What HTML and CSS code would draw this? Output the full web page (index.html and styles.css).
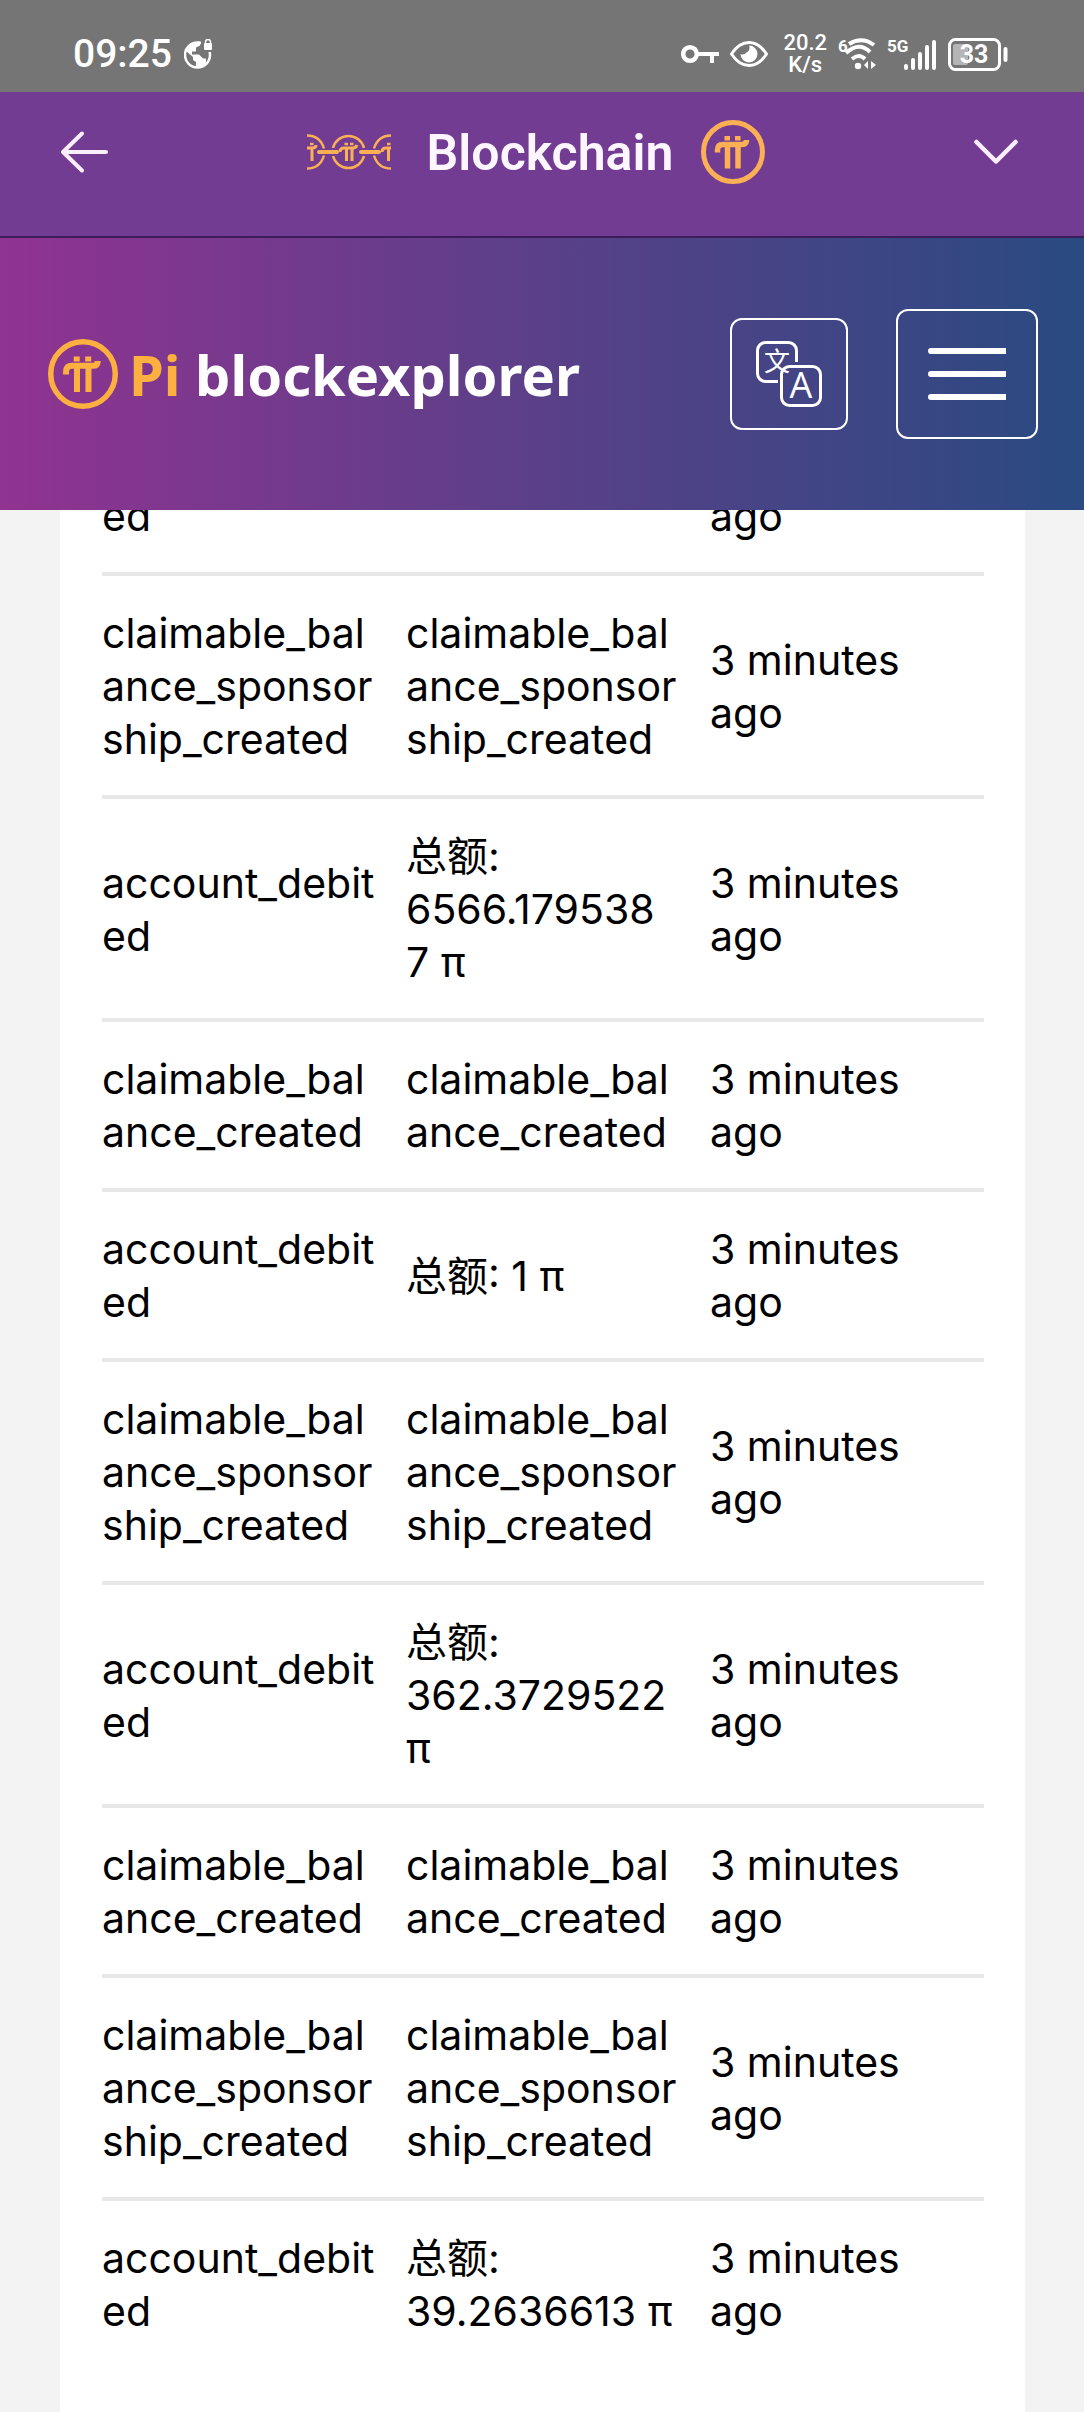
FILE: index.html
```html
<!DOCTYPE html>
<html lang="zh">
<head>
<meta charset="utf-8">
<meta name="viewport" content="width=device-width, initial-scale=1">
<title>Pi blockexplorer</title>
<link rel="stylesheet" href="styles.css">
</head>
<body>
<svg class="defs" aria-hidden="true">
  <symbol id="pi" viewBox="0 0 64 64">
    <circle cx="32" cy="32" r="29.5" fill="none" stroke="currentColor" stroke-width="5"/>
    <path d="M23.5 16h5.500v4.500h-5.500zM34 16h5.500v4.500h-5.500z" fill="currentColor"/>
    <path d="M16.500 32.500v-2.500q0-5.500 5.500-5.500h19q4.500 0 4.500-4.500M26.500 25v23.500M37 25v23.500" fill="none" stroke="currentColor" stroke-width="5.500"/>
  </symbol>
</svg>

<div class="status">
  <div class="status-group">
    <span class="clock">09:25</span>
    <svg width="28" height="30" viewBox="0 0 28 30" aria-hidden="true">
      <circle cx="13.500" cy="16" r="12.500" fill="none" stroke="#fff" stroke-width="2.500"/>
      <path d="M2 12q4-9 14-9.500v4l-4 2v4H8v3h7l4 4h3v4q-4 5-10 4.500v-5l-3-2v-3z" fill="#fff"/>
      <path d="M17 0h11v13H17z" fill="#757575"/>
      <rect x="20" y="4" width="8" height="7" rx="1" fill="#fff"/>
      <path d="M21.500 5V3a2.500 2.500 0 0 1 5 0v2" fill="none" stroke="#fff" stroke-width="1.500"/>
    </svg>
  </div>
  <div class="status-group status-icons">
    <svg width="38" height="20" viewBox="0 0 38 20" aria-hidden="true">
      <circle cx="9" cy="10" r="6.800" fill="none" stroke="#fff" stroke-width="4.500"/>
      <path d="M16 10h22M31 10v9" fill="none" stroke="#fff" stroke-width="4"/>
    </svg>
    <svg width="38" height="28" viewBox="0 0 38 28" aria-hidden="true">
      <path d="M1.500 14Q9 2.500 19 2.500T36.500 14Q29 25.500 19 25.500T1.500 14z" fill="none" stroke="#fff" stroke-width="3"/>
      <path d="M19 5.500a8.500 8.500 0 1 1-8.500 8.500 5 5 0 0 0 6-1.500 5 5 0 0 0 2.500-7z" fill="#fff"/>
    </svg>
    <div class="speed"><span>20.2</span><span>K/s</span></div>
    <svg width="38" height="36" viewBox="0 0 38 36" aria-hidden="true">
      <text x="0" y="16" class="tiny">6</text>
      <path d="M11 8q13-8 25 1M8 17q13-12 24-1M14 23q7-6 13 0" fill="none" stroke="#fff" stroke-width="4"/>
      <circle cx="20" cy="30" r="3.200" fill="#fff"/>
      <path d="M30 25v8l-4-4zM33 25v8l5-4z" fill="#fff"/>
    </svg>
    <svg width="50" height="36" viewBox="0 0 50 36" aria-hidden="true">
      <text x="0" y="16" class="tiny">5G</text>
      <path d="M19 30v2M26 24v8M33 18v14M40 11v21M47 6v26" stroke="#fff" stroke-width="4" stroke-linecap="round"/>
    </svg>
    <svg width="60" height="34" viewBox="0 0 60 34" aria-hidden="true">
      <rect x="1.500" y="2.500" width="50" height="30" rx="6" fill="none" stroke="#fff" stroke-width="3"/>
      <rect x="5" y="7" width="15" height="21" rx="2" fill="#b5b5b5"/>
      <path d="M57.500 12v11" stroke="#fff" stroke-width="4" stroke-linecap="round"/>
      <text x="26" y="26" class="level">33</text>
    </svg>
  </div>
</div>

<header class="titlebar">
  <button class="icon-button" aria-label="Back">
    <svg width="48" height="44" viewBox="0 0 48 44"><path d="M22 3.500L3 22l19 18.500M3 22h43" fill="none" stroke="#fbeeff" stroke-width="4" stroke-linecap="round" stroke-linejoin="round"/></svg>
  </button>
  <div class="titlebar-title">
    <svg class="gold" width="84" height="36" viewBox="0 0 84 36" fill="none" stroke="currentColor" aria-hidden="true">
      <path d="M0 1.500q13 0 17 13M0 34.500q13 0 17-13M84 1.500q-13 0-17 13M84 34.500q-13 0-17-13M26 14a16 16 0 0 1 31 0M26 22a16 16 0 0 0 31 0" stroke-width="2.500"/>
      <path d="M12 18h18M54 18h18" stroke-width="4" stroke-linecap="round"/>
      <path d="M33 18q0-4 4-4h9q3 0 4-3M39.500 14v13M45 14v13M0 14h5q4 0 4-3M5 14v13M75 18q0-4 4-4h5M81.500 14v13" stroke-width="3"/>
      <path d="M37.500 10h3.500M43 10h3.500M3 10h3.500M80 10h3.500" stroke-width="2.500"/>
    </svg>
    <h1>Blockchain</h1>
    <svg class="gold" width="64" height="64" aria-hidden="true"><use href="#pi"/></svg>
  </div>
  <button class="icon-button icon-button-end" aria-label="More">
    <svg width="44" height="26" viewBox="0 0 44 26"><path d="M2.500 3L22 22.500 41.500 3" fill="none" stroke="#fbeeff" stroke-width="4.500" stroke-linecap="round" stroke-linejoin="round"/></svg>
  </button>
</header>

<nav class="nav">
  <a class="brand" href="#">
    <svg width="70" height="70" aria-hidden="true"><use href="#pi"/></svg>
    <span>Pi <span class="brand-name">blockexplorer</span></span>
  </a>
  <div class="nav-actions">
    <button class="nav-button lang" aria-label="Language">
      <svg width="66" height="66" viewBox="0 0 66 66" fill="none" stroke="#fff" stroke-width="3">
        <path d="M22 40.500H9.500a8 8 0 0 1-8-8v-23a8 8 0 0 1 8-8h23a8 8 0 0 1 8 8V21"/>
        <rect x="25.500" y="25.500" width="39" height="39" rx="8"/>
        <text x="21" y="30" class="glyph-zh">文</text>
        <text x="45" y="57" class="glyph-a">A</text>
      </svg>
    </button>
    <button class="nav-button menu" aria-label="Menu">
      <svg width="78" height="52" viewBox="0 0 78 52"><path d="M78 0v6H3a3 3 0 0 1 0-6zM78 23v6H3a3 3 0 0 1 0-6zM78 46v6H3a3 3 0 0 1 0-6z" fill="#fff"/></svg>
    </button>
  </div>
</nav>

<main class="page">
  <div class="card">
    <table class="effects">
      <colgroup><col class="col-main"><col class="col-main"><col></colgroup>
      <tbody>
        <tr class="continued"><td>ed</td><td></td><td>ago</td></tr>
        <tr><td>claimable_bal<br>ance_sponsor<br>ship_created</td><td>claimable_bal<br>ance_sponsor<br>ship_created</td><td>3 minutes<br>ago</td></tr>
        <tr><td>account_debit<br>ed</td><td>总额:<br>6566.179538<br>7 π</td><td>3 minutes<br>ago</td></tr>
        <tr><td>claimable_bal<br>ance_created</td><td>claimable_bal<br>ance_created</td><td>3 minutes<br>ago</td></tr>
        <tr><td>account_debit<br>ed</td><td>总额: 1 π</td><td>3 minutes<br>ago</td></tr>
        <tr><td>claimable_bal<br>ance_sponsor<br>ship_created</td><td>claimable_bal<br>ance_sponsor<br>ship_created</td><td>3 minutes<br>ago</td></tr>
        <tr><td>account_debit<br>ed</td><td>总额:<br>362.3729522<br>π</td><td>3 minutes<br>ago</td></tr>
        <tr><td>claimable_bal<br>ance_created</td><td>claimable_bal<br>ance_created</td><td>3 minutes<br>ago</td></tr>
        <tr><td>claimable_bal<br>ance_sponsor<br>ship_created</td><td>claimable_bal<br>ance_sponsor<br>ship_created</td><td>3 minutes<br>ago</td></tr>
        <tr><td>account_debit<br>ed</td><td>总额:<br>39.2636613 π</td><td>3 minutes<br>ago</td></tr>
      </tbody>
    </table>
  </div>
</main>
</body>
</html>
```

FILE: styles.css
```css
* {
  box-sizing: border-box;
}

body {
  margin: 0;
  min-height: 100vh;
  display: flex;
  flex-direction: column;
  background: #f3f3f3;
  color: #000;
  font-family: Inter, "Noto Sans CJK SC", sans-serif;
}

svg {
  display: block;
  flex: none;
}

button {
  padding: 0;
  border: 0;
  background: none;
  color: inherit;
  font: inherit;
}

.defs {
  position: absolute;
  width: 0;
  height: 0;
}

.gold {
  color: #fbb055;
}

/* Device status bar */
.status {
  display: flex;
  justify-content: space-between;
  align-items: center;
  height: 92px;
  padding: 16px 76px 0 73px;
  background: #757575;
  color: #fff;
  font-family: Roboto, sans-serif;
  font-weight: 500;
}

.status-group {
  display: flex;
  align-items: center;
  gap: 12px;
}

.status-icons {
  gap: 11px;
}

.clock {
  font-size: 39px;
  line-height: 44px;
}

.speed {
  display: flex;
  flex-direction: column;
  margin-left: 4px;
  font-size: 22px;
  line-height: 22px;
  text-align: center;
}

.tiny {
  fill: #fff;
  font-size: 17px;
  font-weight: 700;
}

.level {
  fill: #fff;
  font-size: 25px;
  font-weight: 700;
  text-anchor: middle;
}

/* App title bar */
.titlebar {
  display: flex;
  justify-content: space-between;
  align-items: center;
  height: 146px;
  padding: 0 66px 24px 60px;
  background: #723c92;
  border-bottom: 2px solid #3c1d5a;
}

.icon-button-end {
  display: flex;
  justify-content: flex-end;
  width: 54px;
}

.titlebar-title {
  display: flex;
  align-items: center;
}

.titlebar-title h1 {
  margin: 0 28px 0 36px;
  padding-top: 2px;
  color: #fdf5ff;
  font-family: Roboto, sans-serif;
  font-size: 50px;
  font-weight: 600;
  line-height: 60px;
}

/* Site navigation */
.nav {
  position: relative;
  z-index: 1;
  display: flex;
  justify-content: space-between;
  align-items: center;
  height: 272px;
  padding: 0 46px 0 48px;
  background: linear-gradient(90deg, #903391 0%, #5a4088 50%, #2a4a82 100%);
}

.brand {
  display: flex;
  align-items: center;
  gap: 11px;
  color: #fbb03f;
  font-family: "Noto Sans", sans-serif;
  font-size: 56px;
  font-weight: 700;
  line-height: 70px;
  text-decoration: none;
  white-space: nowrap;
}

.brand-name {
  color: #fff;
}

.nav-actions {
  display: flex;
  align-items: center;
  gap: 48px;
}

.nav-button {
  display: flex;
  align-items: center;
  justify-content: center;
  border: 2px solid #fff;
  border-radius: 12px;
}

.lang {
  width: 118px;
  height: 112px;
}

.menu {
  width: 142px;
  height: 130px;
}

.glyph-zh,
.glyph-a {
  fill: #fff;
  stroke: none;
  text-anchor: middle;
}

.glyph-zh {
  font-family: "Noto Sans CJK SC", sans-serif;
  font-size: 26px;
}

.glyph-a {
  font-family: "Open Sans", sans-serif;
  font-size: 36px;
}

/* Effects list */
.page {
  flex: 1;
  display: flex;
  margin-top: -20px;
  padding: 0 59px 0 60px;
}

.card {
  flex: 1;
  padding: 0 41px 0 42px;
  background: #fff;
}

.effects {
  width: 100%;
  table-layout: fixed;
  border-spacing: 0;
  font-size: 41px;
  line-height: 53px;
}

.col-main {
  width: 304px;
}

.effects td {
  padding: 31px 0 29px;
  border-bottom: 4px solid #e8e8e8;
  vertical-align: middle;
  white-space: nowrap;
}

.effects .continued td {
  padding-top: 0;
}

.effects tr:last-child td {
  border-bottom: 0;
}
```
